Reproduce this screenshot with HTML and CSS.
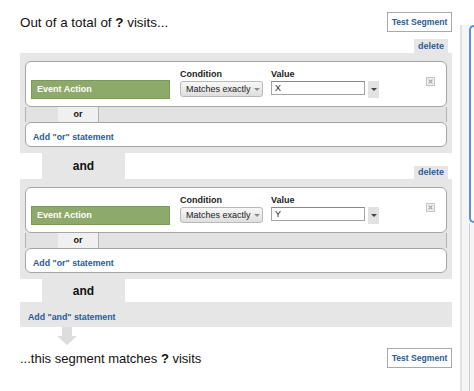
FILE: index.html
```html
<!DOCTYPE html>
<html lang="en">
<head>
  <meta charset="UTF-8">
  <title>Segment Builder</title>
  <link rel="stylesheet" href="styles.css">
</head>
<body>
<div class="page">
  <div class="builder">
    <div class="head-row">
      <h1 class="count top">Out of a total of <b>?</b> visits...</h1>
      <button class="test-btn" type="button">Test Segment</button>
    </div>

    <div class="tab-row first">
      <a class="delete-tab" href="#">delete</a>
    </div>
    <div class="and-block">
      <div class="rule-box">
        <div class="dim">Event Action</div>
        <div class="field cond">
          <label>Condition</label>
          <span class="select">Matches exactly <i class="caret"></i></span>
        </div>
        <div class="field val">
          <label>Value</label>
          <div class="combo">
            <span class="input">X</span>
            <span class="drop"><i class="caret dark"></i></span>
          </div>
        </div>
        <span class="close">
          <svg width="9" height="9" viewBox="0 0 9 9"><rect x="0.5" y="0.5" width="8" height="8" fill="#f4f4f4" stroke="#c4c4c4"/><path d="M2.5 2.5 L6.5 6.5 M6.5 2.5 L2.5 6.5" stroke="#a8a8a8" stroke-width="1.1"/></svg>
        </span>
      </div>
      <div class="or-row"><span class="or-left"></span><span class="or-tab">or</span><span class="or-right"></span></div>
      <div class="add-or"><a href="#">Add "or" statement</a></div>
    </div>

    <div class="tab-row">
      <span class="and-tab">and</span>
      <a class="delete-tab" href="#">delete</a>
    </div>
    <div class="and-block">
      <div class="rule-box">
        <div class="dim">Event Action</div>
        <div class="field cond">
          <label>Condition</label>
          <span class="select">Matches exactly <i class="caret"></i></span>
        </div>
        <div class="field val">
          <label>Value</label>
          <div class="combo">
            <span class="input">Y</span>
            <span class="drop"><i class="caret dark"></i></span>
          </div>
        </div>
        <span class="close">
          <svg width="9" height="9" viewBox="0 0 9 9"><rect x="0.5" y="0.5" width="8" height="8" fill="#f4f4f4" stroke="#c4c4c4"/><path d="M2.5 2.5 L6.5 6.5 M6.5 2.5 L2.5 6.5" stroke="#a8a8a8" stroke-width="1.1"/></svg>
        </span>
      </div>
      <div class="or-row"><span class="or-left"></span><span class="or-tab">or</span><span class="or-right"></span></div>
      <div class="add-or"><a href="#">Add "or" statement</a></div>
    </div>

    <div class="tab-row last">
      <span class="and-tab">and</span>
    </div>
    <div class="add-and"><a href="#">Add "and" statement</a></div>
    <svg class="arrow" width="20" height="18" viewBox="0 0 20 18"><path d="M5 0 H15 V9 H20 L10 18 L0 9 H5 Z" fill="#dddddd"/></svg>

    <div class="head-row foot">
      <p class="count">...this segment matches <b>?</b> visits</p>
      <button class="test-btn" type="button">Test Segment</button>
    </div>
  </div>

  <div class="sidebar">
    <div class="side-inner">
      <div class="side-panel"></div>
      <div class="side-rest"></div>
    </div>
  </div>
</div>
</body>
</html>
```

FILE: styles.css
```css
body {
  margin: 0;
  font-family: "Liberation Sans", Arial, sans-serif;
  background-color: #fff;
  color: #111;
}

.page {
  display: flex;
  width: 474px;
  height: 391px;
  overflow: hidden;
}

.builder {
  flex: none;
  width: 432px;
  padding-left: 20px;
}

.head-row {
  display: flex;
  justify-content: space-between;
  align-items: center;
  height: 20px;
  margin-top: 12px;
}

.count {
  margin: 0;
  font-size: 13px;
  font-weight: normal;
}

.count.top {
  font-size: 13.4px;
}

.count b {
  font-weight: bold;
}

.test-btn {
  width: 65px;
  height: 20px;
  padding: 0;
  border: 1px solid #a9a9a9;
  background-color: #fff;
  color: #2d5a91;
  font: bold 8.6px "Liberation Sans", Arial, sans-serif;
}

/* rows between blocks */
.tab-row {
  display: flex;
  align-items: flex-end;
  height: 26px;
}

.tab-row.first {
  height: 21px;
}

.tab-row.last {
  height: 23px;
}

.delete-tab {
  margin-left: auto;
  margin-right: 4px;
  width: 34px;
  height: 13px;
  line-height: 13px;
  text-align: center;
  background-color: #e6e6e6;
  color: #2b5d98;
  font-size: 9px;
  font-weight: bold;
  text-decoration: none;
}

.tab-row.first .delete-tab {
  height: 14px;
  line-height: 15px;
}

.and-tab {
  align-self: stretch;
  margin-left: 22px;
  width: 83px;
  display: flex;
  align-items: center;
  justify-content: center;
  background-color: #e6e6e6;
  font-size: 12px;
  font-weight: bold;
}

.and-block {
  background-color: #e6e6e6;
  padding: 8px 5px 6px;
}

.rule-box {
  position: relative;
  display: flex;
  align-items: flex-end;
  height: 30px;
  padding: 7px 5px;
  border: 1px solid #a6a6a6;
  border-radius: 6px;
  background-color: #fff;
}

.dim {
  width: 132px;
  height: 17px;
  padding-left: 5px;
  line-height: 17px;
  border: 1px solid #7c985a;
  background-color: #8eaa6a;
  color: #fff;
  font-size: 9px;
  font-weight: bold;
}

.field label {
  display: block;
  height: 11px;
  line-height: 11px;
  font-size: 9px;
  font-weight: bold;
  color: #222;
}

.cond {
  margin-left: 10px;
}

.val {
  margin-left: 8px;
}

.select {
  display: flex;
  align-items: center;
  box-sizing: border-box;
  width: 83px;
  height: 16px;
  margin: 1px 0 2px;
  padding: 0 0 0 5px;
  border: 1px solid #b9b9b9;
  border-radius: 3px;
  background: linear-gradient(#f8f8f8, #dedede);
  font-size: 9px;
  color: #222;
}

.caret {
  display: inline-block;
  margin-left: 3px;
  border-left: 3px solid transparent;
  border-right: 3px solid transparent;
  border-top: 3px solid #8a8a8a;
}

.caret.dark {
  margin: 0;
  border-top-color: #444;
}

.combo {
  display: flex;
  align-items: flex-start;
  height: 19px;
}

.input {
  box-sizing: border-box;
  width: 94px;
  height: 14px;
  margin-top: 1px;
  padding-left: 3px;
  line-height: 12px;
  border: 1px solid #a4a4a4;
  border-top-color: #8a8a8a;
  font-size: 9px;
  color: #222;
}

.drop {
  display: flex;
  align-items: center;
  justify-content: center;
  width: 11px;
  height: 17px;
  margin: 1px 0 0 3px;
  background-color: #e2e2e2;
}

.close {
  position: absolute;
  top: 15px;
  right: 11px;
  line-height: 0;
}

.or-row {
  display: flex;
  height: 15px;
}

.or-left {
  width: 32px;
  border-left: 1px solid #b3b3b3;
  background-color: #e2e2e2;
}

.or-tab {
  width: 40px;
  line-height: 15px;
  text-align: center;
  background-color: #f0f0f0;
  font-size: 9px;
  font-weight: bold;
}

.or-right {
  flex: 1;
  border-left: 1px solid #b3b3b3;
  border-right: 1px solid #b3b3b3;
  background-color: #e2e2e2;
}

.add-or {
  height: 23px;
  padding-left: 7px;
  line-height: 23px;
  border: 1px solid #a6a6a6;
  border-radius: 6px;
  background-color: #fff;
}

.add-or a,
.add-and a {
  color: #2a5b97;
  font-size: 8.8px;
  font-weight: bold;
  text-decoration: none;
}

.add-and {
  height: 25px;
  padding-left: 8px;
  line-height: 25px;
  background-color: #e6e6e6;
}

.arrow {
  display: block;
  margin-left: 37px;
}

.head-row.foot {
  margin-top: 3px;
}

/* right edge panel */
.sidebar {
  flex: none;
  width: 22px;
  padding-left: 8px;
}

.side-inner {
  height: 100%;
  padding-left: 7px;
  border-left: 2px solid #e2e2e2;
  background-color: #f5f5f5;
}

.side-panel {
  margin-top: 25px;
  height: 194px;
  border: 2px solid #5b8fdc;
  border-right: 0;
  border-radius: 5px 0 0 5px;
  background-color: #fbfdff;
}

.side-rest {
  height: 172px;
  border-left: 1px solid #cdcdcd;
}
```
